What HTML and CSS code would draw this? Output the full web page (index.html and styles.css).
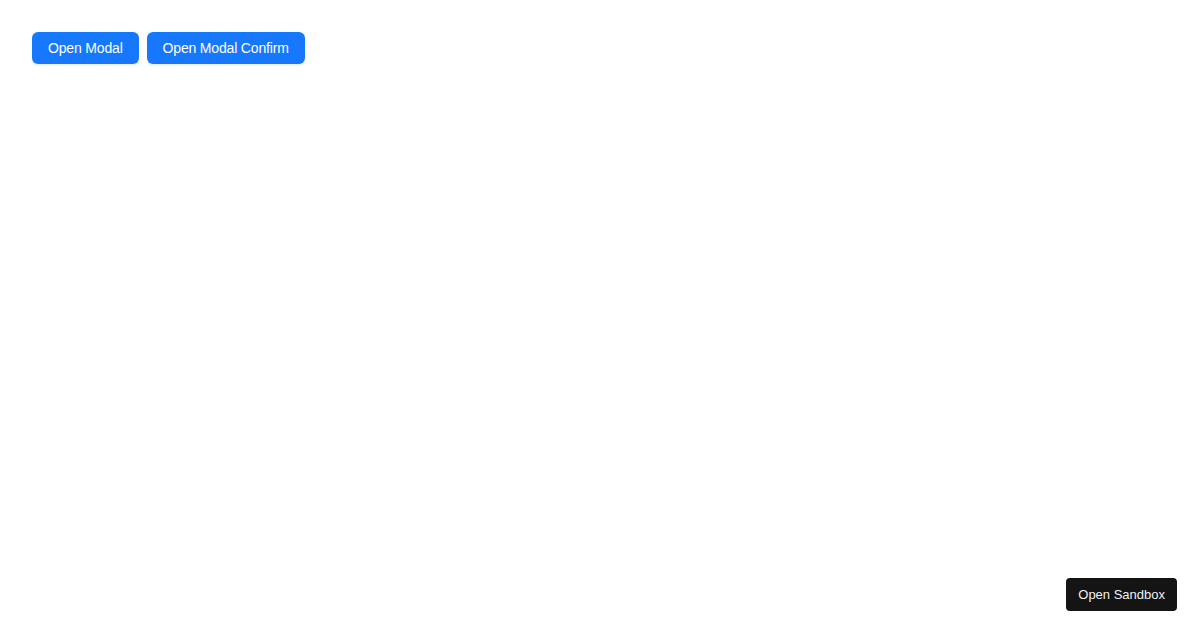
FILE: index.html
```html
<!DOCTYPE html>
<html>
<head>
<meta charset="utf-8">
<link rel="stylesheet" href="styles.css">
</head>
<body>
<div class="page">
  <div class="actions">
    <button class="btn btn-primary">Open Modal</button>
    <button class="btn btn-primary">Open Modal Confirm</button>
  </div>
</div>
<button class="sandbox">Open Sandbox</button>
</body>
</html>
```
FILE: styles.css
```css
html, body {
  margin: 0;
  padding: 0;
  background: #fff;
  font-family: "Liberation Sans", Arial, sans-serif;
}
.page {
  padding: 32px;
}
.actions {
  display: flex;
  gap: 8px;
}
.btn {
  height: 32px;
  padding: 0 15px;
  font-family: "Liberation Sans", Arial, sans-serif;
  font-size: 14px;
  letter-spacing: -0.17px;
  border-radius: 6px;
  border: 1px solid transparent;
  cursor: pointer;
  line-height: 30px;
}
.btn-primary {
  background: #1677ff;
  color: #fff;
  box-shadow: 0 2px 0 rgba(5, 145, 255, 0.1);
}
.sandbox {
  position: fixed;
  right: 23px;
  bottom: 19px;
  height: 33px;
  padding: 0 12px;
  background: #141414;
  color: #f0f0f0;
  border: none;
  border-radius: 4px;
  font-family: "Liberation Sans", Arial, sans-serif;
  font-size: 13px;
  cursor: pointer;
}
```
